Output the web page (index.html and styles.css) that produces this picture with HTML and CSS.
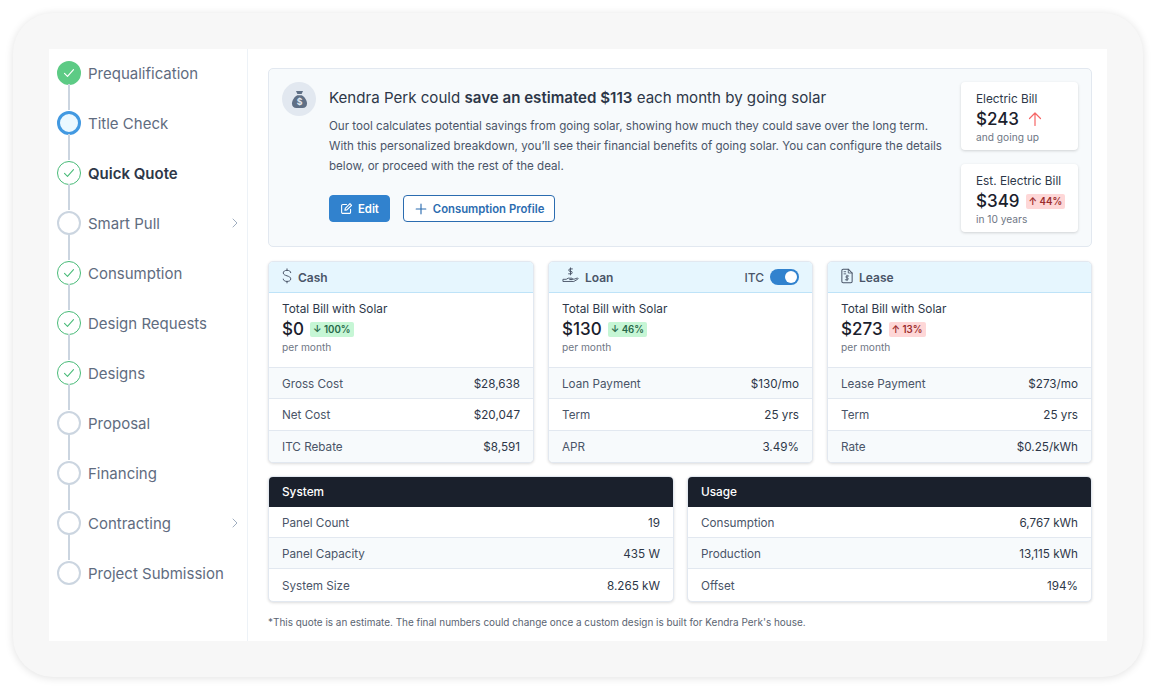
FILE: index.html
```html
<!DOCTYPE html>
<html lang="en">
<head>
  <meta charset="UTF-8">
  <title>Quick Quote</title>
  <link rel="stylesheet" href="styles.css">
</head>
<body>
  <div class="frame">
    <div class="app">
      <!-- Steps -->
      <nav class="sidebar">
        <div class="step done-fill">
          <span class="dot"><svg viewBox="0 0 24 24" width="18" height="18"><path d="M6 12.500l4 4 8-9" fill="none" stroke="#fff" stroke-width="1.600" stroke-linecap="round" stroke-linejoin="round"/></svg></span>
          <span class="label">Prequalification</span>
        </div>
        <div class="step current">
          <span class="dot"></span>
          <span class="label">Title Check</span>
        </div>
        <div class="step done active">
          <span class="dot"><svg viewBox="0 0 24 24" width="18" height="18"><path d="M6 12.500l4 4 8-9" fill="none" stroke="#48bb78" stroke-width="1.400" stroke-linecap="round" stroke-linejoin="round"/></svg></span>
          <span class="label">Quick Quote</span>
        </div>
        <div class="step">
          <span class="dot"></span>
          <span class="label">Smart Pull</span>
          <svg class="chevron" viewBox="0 0 8 12" width="8" height="12"><path d="M2 2l4 4-4 4" fill="none" stroke="#a0aec0" stroke-width="1" stroke-linecap="round" stroke-linejoin="round"/></svg>
        </div>
        <div class="step done">
          <span class="dot"><svg viewBox="0 0 24 24" width="18" height="18"><path d="M6 12.500l4 4 8-9" fill="none" stroke="#48bb78" stroke-width="1.400" stroke-linecap="round" stroke-linejoin="round"/></svg></span>
          <span class="label">Consumption</span>
        </div>
        <div class="step done">
          <span class="dot"><svg viewBox="0 0 24 24" width="18" height="18"><path d="M6 12.500l4 4 8-9" fill="none" stroke="#48bb78" stroke-width="1.400" stroke-linecap="round" stroke-linejoin="round"/></svg></span>
          <span class="label">Design Requests</span>
        </div>
        <div class="step done">
          <span class="dot"><svg viewBox="0 0 24 24" width="18" height="18"><path d="M6 12.500l4 4 8-9" fill="none" stroke="#48bb78" stroke-width="1.400" stroke-linecap="round" stroke-linejoin="round"/></svg></span>
          <span class="label">Designs</span>
        </div>
        <div class="step">
          <span class="dot"></span>
          <span class="label">Proposal</span>
        </div>
        <div class="step">
          <span class="dot"></span>
          <span class="label">Financing</span>
        </div>
        <div class="step">
          <span class="dot"></span>
          <span class="label">Contracting</span>
          <svg class="chevron" viewBox="0 0 8 12" width="8" height="12"><path d="M2 2l4 4-4 4" fill="none" stroke="#a0aec0" stroke-width="1" stroke-linecap="round" stroke-linejoin="round"/></svg>
        </div>
        <div class="step last">
          <span class="dot"></span>
          <span class="label">Project Submission</span>
        </div>
      </nav>

      <main class="content">
        <!-- Summary -->
        <section class="hero">
          <div class="hero-icon">
            <svg viewBox="0 0 24 24" width="21" height="21"><path d="M8 2.200h8l-1.600 3.600H9.600z" fill="#5f6f85"/><path d="M9.400 7h5.200c3.400 2 6 6 6 9.600 0 3.200-2 5.200-5 5.200H8.400c-3 0-5-2-5-5.200C3.400 13 6 9 9.400 7z" fill="#5f6f85"/><text x="12" y="18.500" text-anchor="middle" class="hero-icon-sign">$</text></svg>
          </div>
          <div class="hero-text">
            <h2>Kendra Perk could <strong>save an estimated $113</strong> each month by going solar</h2>
            <p>Our tool calculates potential savings from going solar, showing how much they could save over the long term. With this personalized breakdown, you’ll see their financial benefits of going solar. You can configure the details below, or proceed with the rest of the deal.</p>
            <div class="hero-actions">
              <button class="btn btn-solid">
                <svg viewBox="0 0 16 16" width="13" height="13"><path d="M13 9v3.500a1.500 1.500 0 0 1-1.500 1.500h-8A1.500 1.500 0 0 1 2 12.500v-8A1.500 1.500 0 0 1 3.500 3H8" fill="none" stroke="#fff" stroke-width="1.300" stroke-linecap="round"/><path d="M6 10.200l.5-2.500L12.300 2l2 2-5.800 5.700z" fill="none" stroke="#fff" stroke-width="1.300" stroke-linejoin="round"/></svg>
                Edit
              </button>
              <button class="btn btn-outline">
                <svg viewBox="0 0 16 16" width="14" height="14"><path d="M8 2.500v11M2.500 8h11" fill="none" stroke="#2b6cb0" stroke-width="1.300" stroke-linecap="round"/></svg>
                Consumption Profile
              </button>
            </div>
          </div>
          <div class="bills">
            <div class="bill">
              <div class="bill-title">Electric Bill</div>
              <div class="amount-row">
                <span class="amount">$243</span>
                <svg class="bill-arrow" viewBox="0 0 14 16" width="14" height="16"><path d="M7 14.500V2M1.500 7.500L7 2l5.500 5.500" fill="none" stroke="#f56565" stroke-width="1.200" stroke-linecap="round" stroke-linejoin="round"/></svg>
              </div>
              <div class="note">and going up</div>
            </div>
            <div class="bill">
              <div class="bill-title">Est. Electric Bill</div>
              <div class="amount-row">
                <span class="amount">$349</span>
                <span class="badge badge-up">↑ 44%</span>
              </div>
              <div class="note">in 10 years</div>
            </div>
          </div>
        </section>

        <!-- Payment options -->
        <section class="options">
          <div class="card">
            <div class="card-head">
              <svg class="head-icon" viewBox="0 0 12 18" width="10" height="18"><path d="M10.500 5C10.500 3.200 8.500 2.200 6 2.200S1.500 3.400 1.500 5.300 3.500 8 6 8.800s4.500 1.600 4.500 3.700S8.500 15.500 6 15.500 1.500 14.500 1.500 12.700M6 .4v1.800M6 15.500v1.800" fill="none" stroke="#4a5568" stroke-width="1.200" stroke-linecap="round"/></svg>
              <span class="card-title">Cash</span>
            </div>
            <div class="card-body">
              <div class="bill-title">Total Bill with Solar</div>
              <div class="amount-row">
                <span class="amount">$0</span>
                <span class="badge badge-down">↓ 100%</span>
              </div>
              <div class="note">per month</div>
            </div>
            <div class="row shade"><span>Gross Cost</span><b>$28,638</b></div>
            <div class="row"><span>Net Cost</span><b>$20,047</b></div>
            <div class="row shade"><span>ITC Rebate</span><b>$8,591</b></div>
          </div>

          <div class="card">
            <div class="card-head">
              <svg class="head-icon" viewBox="0 0 18 18" width="17" height="18"><path d="M1 12.500h3.500l2-1.200h3.800c1 0 1 1.500 0 1.500H8l5.500-.6 2.500-1c1-.3 1.400.8.500 1.300l-4 2.300H1z" fill="none" stroke="#4a5568" stroke-width="1" stroke-linejoin="round"/><path d="M11 1.500H8.500a1.300 1.300 0 0 0 0 2.600h1a1.300 1.300 0 0 1 0 2.600H7M9 .4v7.400" fill="none" stroke="#4a5568" stroke-width="1" stroke-linecap="round"/></svg>
              <span class="card-title">Loan</span>
              <span class="itc">ITC</span>
              <span class="toggle"><span class="knob"></span></span>
            </div>
            <div class="card-body">
              <div class="bill-title">Total Bill with Solar</div>
              <div class="amount-row">
                <span class="amount">$130</span>
                <span class="badge badge-down">↓ 46%</span>
              </div>
              <div class="note">per month</div>
            </div>
            <div class="row shade"><span>Loan Payment</span><b>$130/mo</b></div>
            <div class="row"><span>Term</span><b>25 yrs</b></div>
            <div class="row shade"><span>APR</span><b>3.49%</b></div>
          </div>

          <div class="card">
            <div class="card-head">
              <svg class="head-icon" viewBox="0 0 14 18" width="12" height="18"><path d="M2.500 1h6L13 5.500v10a1.500 1.500 0 0 1-1.500 1.500h-9A1.500 1.500 0 0 1 1 15.500v-13A1.500 1.500 0 0 1 2.500 1z" fill="none" stroke="#4a5568" stroke-width="1.200" stroke-linejoin="round"/><path d="M8.500 1.200v4.300H13M3.500 4h2M3.500 6.500h2M9 9H6.800a1.100 1.100 0 0 0 0 2.200h.6a1.100 1.100 0 0 1 0 2.200H5M7 8v6.500" fill="none" stroke="#4a5568" stroke-width="1" stroke-linecap="round"/></svg>
              <span class="card-title lease-title">Lease</span>
            </div>
            <div class="card-body">
              <div class="bill-title">Total Bill with Solar</div>
              <div class="amount-row">
                <span class="amount">$273</span>
                <span class="badge badge-up">↑ 13%</span>
              </div>
              <div class="note">per month</div>
            </div>
            <div class="row shade"><span>Lease Payment</span><b>$273/mo</b></div>
            <div class="row"><span>Term</span><b>25 yrs</b></div>
            <div class="row shade"><span>Rate</span><b>$0.25/kWh</b></div>
          </div>
        </section>

        <!-- System and usage -->
        <section class="stats">
          <div class="card">
            <div class="dark-head">System</div>
            <div class="row"><span>Panel Count</span><b>19</b></div>
            <div class="row shade"><span>Panel Capacity</span><b>435 W</b></div>
            <div class="row"><span>System Size</span><b>8.265 kW</b></div>
          </div>
          <div class="card">
            <div class="dark-head">Usage</div>
            <div class="row"><span>Consumption</span><b>6,767 kWh</b></div>
            <div class="row shade"><span>Production</span><b>13,115 kWh</b></div>
            <div class="row"><span>Offset</span><b>194%</b></div>
          </div>
        </section>

        <p class="footnote">*This quote is an estimate. The final numbers could change once a custom design is built for Kendra Perk's house.</p>
      </main>
    </div>
  </div>
</body>
</html>
```

FILE: styles.css
```css
* {
  box-sizing: border-box;
}

body {
  margin: 0;
  padding: 13px 12px 12px 13px;
  background-color: #fff;
  font-family: "Inter", "Liberation Sans", sans-serif;
  color: #1a202c;
  overflow: hidden;
}

.frame {
  height: 664px;
  padding: 36px;
  background-color: #f7f7f7;
  border-radius: 40px;
  box-shadow: 0 1px 8px rgba(0, 0, 0, 0.12);
}

.app {
  display: flex;
  height: 592px;
  background-color: #fff;
}

/* Sidebar */
.sidebar {
  width: 199px;
  padding: 0 8px;
  border-right: 1px solid #edf2f7;
}

.step {
  position: relative;
  display: flex;
  align-items: center;
  height: 50px;
  padding-bottom: 2px;
}

.step::after {
  content: "";
  position: absolute;
  left: 11px;
  top: 35px;
  width: 2px;
  height: 26px;
  background-color: #cbd5e0;
}

.step.last::after {
  display: none;
}

.dot {
  display: flex;
  align-items: center;
  justify-content: center;
  flex: none;
  width: 24px;
  height: 24px;
  margin-right: 7px;
  background-color: #fff;
  border: 2px solid #cbd5e0;
  border-radius: 50%;
}

.done .dot {
  border: 1.500px solid #48bb78;
}

.done-fill .dot {
  background-color: #5dcb85;
  border-color: #5dcb85;
}

.current .dot {
  background-color: #ebf8ff;
  border: 3px solid #4299e1;
}

.label {
  flex: 1;
  font-size: 15px;
  color: #5f6c80;
}

.active .label {
  font-weight: 600;
  color: #2d3748;
}

/* Main */
.content {
  flex: 1;
  min-width: 0;
  padding: 19px 15px 0 20px;
}

.hero {
  display: flex;
  height: 179px;
  padding: 13px;
  background-color: #f7fafc;
  border: 1px solid #e2e8f0;
  border-radius: 5px;
}

.hero-icon {
  display: flex;
  align-items: center;
  justify-content: center;
  flex: none;
  width: 34px;
  height: 34px;
  background-color: #e2e8f0;
  border-radius: 50%;
}

.hero-icon-sign {
  font-size: 10px;
  font-weight: 700;
  fill: #e2e8f0;
}

.hero-text {
  flex: 1;
  padding: 6px 0 0 13px;
}

.hero-text h2 {
  margin: 0 0 8px 0;
  font-size: 15.100px;
  line-height: 20px;
  font-weight: 400;
  color: #2d3748;
}

.hero-text h2 strong {
  font-weight: 600;
}

.hero-text p {
  margin: 0;
  width: 620px;
  font-size: 11.600px;
  line-height: 20px;
  color: #4a5568;
}

.hero-actions {
  display: flex;
  gap: 13px;
  margin-top: 19px;
}

.btn {
  display: flex;
  align-items: center;
  gap: 5px;
  height: 27px;
  padding: 0 10px;
  font-family: inherit;
  font-size: 11.300px;
  font-weight: 600;
  border-radius: 4px;
}

.btn-solid {
  color: #fff;
  background-color: #3182ce;
  border: 1px solid #3182ce;
}

.btn-outline {
  color: #2b6cb0;
  background-color: #fff;
  border: 1px solid #2b6cb0;
}

.bills {
  display: flex;
  flex-direction: column;
  gap: 14px;
  flex: none;
  width: 117px;
}

.bill {
  height: 68px;
  padding: 10px 14px 0 15px;
  background-color: #fff;
  border-radius: 4px;
  box-shadow: 0 1px 3px rgba(0, 0, 0, 0.16);
}

.bill-title {
  font-size: 11.800px;
  line-height: 14px;
  color: #2d3748;
}

.amount-row {
  display: flex;
  align-items: center;
  height: 22px;
  margin-top: 2px;
}

.amount {
  font-size: 17px;
  font-weight: 500;
  color: #1a202c;
  margin-right: 6px;
}

.bill-arrow {
  margin-left: 3px;
}

.badge {
  padding: 0 3px;
  font-size: 9.700px;
  line-height: 15px;
  font-weight: 600;
  white-space: nowrap;
  border-radius: 2px;
}

.badge-up {
  color: #9b2c2c;
  background-color: #fed7d7;
}

.badge-down {
  color: #276749;
  background-color: #c6f6d5;
}

.note {
  margin-top: 0;
  font-size: 10.200px;
  line-height: 14px;
  color: #6f7785;
}

/* Cards */
.options {
  display: grid;
  grid-template-columns: 266px 265px 265px;
  gap: 14px;
  margin-top: 14px;
}

.stats {
  display: grid;
  grid-template-columns: 406px 405px;
  gap: 13px;
  margin-top: 13px;
}

.card {
  overflow: hidden;
  background-color: #fff;
  border: 1px solid #e2e8f0;
  border-radius: 5px;
  box-shadow: 0 1px 3px rgba(0, 0, 0, 0.14);
}

.card-head {
  display: flex;
  align-items: center;
  height: 31px;
  padding: 0 13px;
  background-color: #e6f6fe;
  border-bottom: 1px solid #bee3f8;
}

.head-icon {
  margin-top: -3px;
}

.card-title {
  flex: 1;
  margin-left: 6px;
  font-size: 12px;
  font-weight: 600;
  color: #4a5568;
}

.itc {
  margin-right: 6px;
  font-size: 12px;
  font-weight: 500;
  color: #4a5568;
}

.toggle {
  display: flex;
  justify-content: flex-end;
  align-items: center;
  width: 29px;
  height: 16px;
  padding: 2px;
  background-color: #3182ce;
  border-radius: 8px;
}

.knob {
  width: 12px;
  height: 12px;
  background-color: #fff;
  border-radius: 50%;
}

.card-body {
  height: 75px;
  padding: 9px 13px 0 13px;
  border-bottom: 1px solid #e2e8f0;
}

.row {
  display: flex;
  justify-content: space-between;
  align-items: center;
  height: 31.300px;
  padding: 2px 13px 0 13px;
  font-size: 11.700px;
  color: #4a5568;
  border-bottom: 1px solid #e2e8f0;
}

.stats .row {
  height: 31.300px;
}

.row:last-child {
  border-bottom: none;
}

.row b {
  font-weight: 400;
  color: #2d3748;
}

.shade {
  background-color: #f7fafc;
}

.dark-head {
  display: flex;
  align-items: center;
  height: 30px;
  padding: 0 13px;
  font-size: 11.800px;
  font-weight: 500;
  color: #fff;
  background-color: #1a202c;
}

.footnote {
  margin: 13px 0 0 0;
  font-size: 9.950px;
  line-height: 14px;
  color: #5a6472;
}
```
